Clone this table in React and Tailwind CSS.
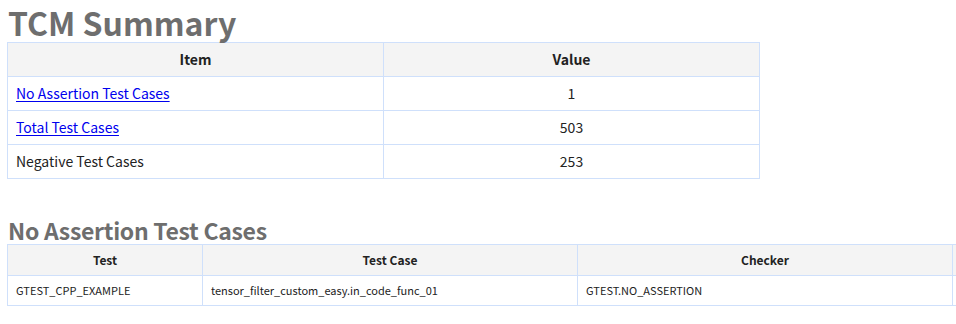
const summaryRows = [
  { item: 'No Assertion Test Cases', value: '1', link: true },
  { item: 'Total Test Cases', value: '503', link: true },
  { item: 'Negative Test Cases', value: '253', link: false },
];

const noAssertionRows = [
  { test: 'GTEST_CPP_EXAMPLE', testCase: 'tensor_filter_custom_easy.in_code_func_01', checker: 'GTEST.NO_ASSERTION' },
];

export default function App() {
  return (
    <div
      className="w-[956px] h-[324px] overflow-hidden bg-white px-[7px] text-[#222]"
      style={{ fontFamily: '"Noto Sans CJK KR", "Noto Sans", sans-serif' }}
    >
      {/* Summary */}
      <h1 className="pl-px pt-[2px] h-[42px] text-[32px] leading-[40px] font-bold text-[#6e6e6e]">TCM Summary</h1>
      <table className="border-collapse text-[14px] w-[753px] table-fixed">
        <thead>
          <tr className="bg-[#f4f4f4]">
            <th className="w-[376px] h-[34px] border border-[#cfe0fb] font-bold">Item</th>
            <th className="h-[34px] border border-[#cfe0fb] font-bold">Value</th>
          </tr>
        </thead>
        <tbody>
          {summaryRows.map((row) => (
            <tr key={row.item}>
              <td className="h-[34px] border border-[#cfe0fb] px-2">
                {row.link ? (
                  <a href="#" className="text-[#0000ee] underline underline-offset-2">{row.item}</a>
                ) : (
                  row.item
                )}
              </td>
              <td className="h-[34px] border border-[#cfe0fb] text-center">{row.value}</td>
            </tr>
          ))}
        </tbody>
      </table>

      {/* No assertion list */}
      <h2 className="pl-px mt-[35px] h-[30px] text-[23px] leading-[32px] font-bold text-[#6e6e6e] tracking-[-0.3px]">No Assertion Test Cases</h2>
      <table className="border-collapse w-[1200px] table-fixed">
        <thead>
          <tr className="bg-[#f4f4f4] text-[12px]">
            <th className="w-[195px] h-[31px] border border-[#cfe0fb] font-bold">Test</th>
            <th className="w-[375px] h-[31px] border border-[#cfe0fb] font-bold">Test Case</th>
            <th className="w-[375px] h-[31px] border border-[#cfe0fb] font-bold">Checker</th>
            <th className="h-[31px] border border-[#cfe0fb]"></th>
          </tr>
        </thead>
        <tbody>
          {noAssertionRows.map((row) => (
            <tr key={row.testCase} className="text-[11px]">
              <td className="h-[30px] border border-[#cfe0fb] px-2">{row.test}</td>
              <td className="h-[30px] border border-[#cfe0fb] px-2">{row.testCase}</td>
              <td className="h-[30px] border border-[#cfe0fb] px-2">{row.checker}</td>
              <td className="h-[30px] border border-[#cfe0fb] px-2"></td>
            </tr>
          ))}
        </tbody>
      </table>
    </div>
  );
}
